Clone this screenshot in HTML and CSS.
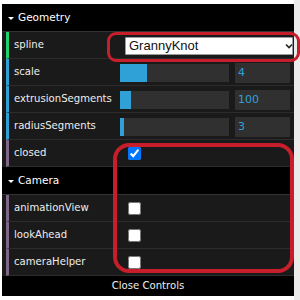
FILE: index.html
```html
<!DOCTYPE html>
<html lang="en">
<head>
    <meta charset="UTF-8">
    <meta name="viewport" content="width=device-width, initial-scale=1.0">
    <title>Controls</title>
    <link rel="stylesheet" href="styles.css">
</head>
<body>
    <div class="dg">
        <ul class="folders">
            <li class="folder">
                <div class="title">Geometry</div>
                <ul>
                    <li class="cr string">
                        <span class="property-name">spline</span>
                        <div class="c">
                            <div class="select-box">
                                <select title="spline">
                                    <option>GrannyKnot</option>
                                    <option>HeartCurve</option>
                                    <option>VivianiCurve</option>
                                    <option>KnotCurve</option>
                                    <option>HelixCurve</option>
                                    <option>TrefoilKnot</option>
                                    <option>TorusKnot</option>
                                    <option>CinquefoilKnot</option>
                                    <option>TrefoilPolynomialKnot</option>
                                    <option>FigureEightPolynomialKnot</option>
                                    <option>DecoratedTorusKnot4a</option>
                                    <option>DecoratedTorusKnot4b</option>
                                    <option>DecoratedTorusKnot5a</option>
                                    <option>DecoratedTorusKnot5c</option>
                                    <option>PipeSpline</option>
                                </select>
                                <svg class="arrow" width="8" height="6" viewBox="0 0 8 6">
                                    <path d="M1 1.5 L4 4.5 L7 1.5" fill="none" stroke="#222" stroke-width="1.6"/>
                                </svg>
                            </div>
                        </div>
                    </li>
                    <li class="cr number">
                        <span class="property-name">scale</span>
                        <div class="c">
                            <div class="slider"><div class="slider-fg" style="width: 27px"></div></div>
                            <input type="text" value="4">
                        </div>
                    </li>
                    <li class="cr number">
                        <span class="property-name">extrusionSegments</span>
                        <div class="c">
                            <div class="slider"><div class="slider-fg" style="width: 11px"></div></div>
                            <input type="text" value="100">
                        </div>
                    </li>
                    <li class="cr number">
                        <span class="property-name">radiusSegments</span>
                        <div class="c">
                            <div class="slider"><div class="slider-fg" style="width: 4px"></div></div>
                            <input type="text" value="3">
                        </div>
                    </li>
                    <li class="cr boolean">
                        <span class="property-name">closed</span>
                        <div class="c"><input type="checkbox" checked></div>
                    </li>
                </ul>
            </li>
            <li class="folder">
                <div class="title">Camera</div>
                <ul>
                    <li class="cr boolean">
                        <span class="property-name">animationView</span>
                        <div class="c"><input type="checkbox"></div>
                    </li>
                    <li class="cr boolean">
                        <span class="property-name">lookAhead</span>
                        <div class="c"><input type="checkbox"></div>
                    </li>
                    <li class="cr boolean">
                        <span class="property-name">cameraHelper</span>
                        <div class="c"><input type="checkbox"></div>
                    </li>
                </ul>
            </li>
        </ul>
        <div class="close-button">Close Controls</div>
    </div>

    <!-- red marker boxes drawn over the screenshot -->
    <div class="mark mark-select"></div>
    <div class="mark mark-checks"></div>
</body>
</html>
```

FILE: styles.css
```css
html {
    background: linear-gradient(to right, #fff 294px, #ebebeb 294px);
}
body {
    margin: 0;
    font-family: "DejaVu Sans", sans-serif;
    font-size: 10.1px;
}
.dg {
    width: 292px;
    margin: 4px 0 0 2px;
    color: #eee;
}
.dg ul {
    list-style: none;
    margin: 0;
    padding: 0;
    background-color: #1a1a1a;
}
.folder {
    border-left: 4px solid #1a1a1a;
}
.title {
    position: relative;
    margin-left: -4px;
    height: 27px;
    line-height: 27px;
    padding-left: 16px;
    background-color: #000;
    color: #fff;
    font-size: 10.5px;
    border-bottom: 1px solid rgba(255, 255, 255, 0.2);
}
.title::before {
    content: "";
    position: absolute;
    left: 6px;
    top: 13px;
    border-left: 3px solid transparent;
    border-right: 3px solid transparent;
    border-top: 3px solid #fff;
}
.cr {
    display: flex;
    align-items: center;
    height: 26px;
    padding: 0 4px 0 5px;
    border-bottom: 1px solid #2c2c2c;
    border-left: 3px solid #2fa1d6;
}
.cr.string {
    border-left-color: #1ed36f;
}
.cr.boolean {
    border-left-color: #806787;
}
.property-name {
    width: 106px;
    flex-shrink: 0;
    white-space: nowrap;
    overflow: hidden;
    line-height: 26px;
}
.c {
    flex: 1;
    display: flex;
    align-items: center;
}
.select-box {
    position: relative;
    margin-left: 5px;
    margin-top: 1px;
}
.select-box select {
    appearance: none;
    width: 168px;
    height: 18px;
    padding: 0 0 0 3px;
    background-color: #fff;
    border: 1px solid #9a9a9a;
    border-radius: 1px;
    color: #111;
    font-family: "Liberation Sans", Arial, sans-serif;
    font-size: 13px;
    outline: none;
}
.arrow {
    position: absolute;
    right: 0;
    top: 6px;
}
.slider {
    width: 109px;
    height: 18px;
    margin-top: 1px;
    background-color: #303030;
}
.slider-fg {
    height: 100%;
    background-color: #2fa1d6;
}
.number input {
    width: 55px;
    height: 20px;
    margin: 1px 0 0 6px;
    padding: 0 3px;
    box-sizing: border-box;
    border: none;
    background-color: #303030;
    color: #2fa1d6;
    font-family: inherit;
    font-size: 11px;
    outline: none;
}
.boolean input {
    width: 13px;
    height: 13px;
    margin: 1px 0 0 8px;
}
.close-button {
    height: 20px;
    line-height: 20px;
    text-align: center;
    background-color: #000;
    color: #eee;
}
.mark {
    position: absolute;
    box-sizing: border-box;
    border: 3px solid #c61f2b;
    border-radius: 9px;
}
.mark-select {
    left: 107px;
    top: 32px;
    width: 193px;
    height: 30px;
}
.mark-checks {
    left: 113px;
    top: 143px;
    width: 181px;
    height: 130px;
    border-width: 4px;
    border-radius: 16px;
}
```
